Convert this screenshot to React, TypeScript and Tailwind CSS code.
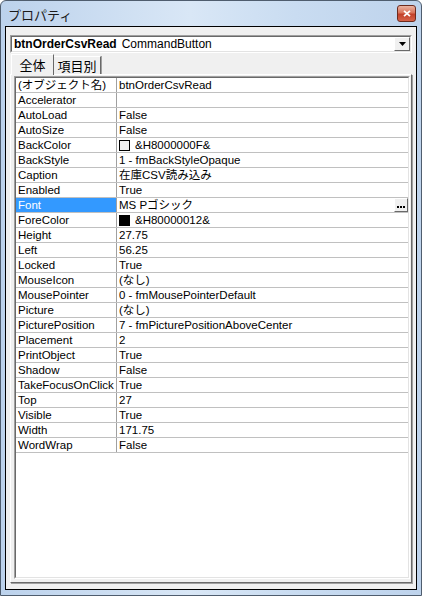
import React from 'react';

interface Prop {
  name: string;
  value: string;
  swatch?: 'light' | 'dark';
  selected?: boolean;
}

const props: Prop[] = [
  { name: '(オブジェクト名)', value: 'btnOrderCsvRead' },
  { name: 'Accelerator', value: '' },
  { name: 'AutoLoad', value: 'False' },
  { name: 'AutoSize', value: 'False' },
  { name: 'BackColor', value: '&H8000000F&', swatch: 'light' },
  { name: 'BackStyle', value: '1 - fmBackStyleOpaque' },
  { name: 'Caption', value: '在庫CSV読み込み' },
  { name: 'Enabled', value: 'True' },
  { name: 'Font', value: 'MS Pゴシック', selected: true },
  { name: 'ForeColor', value: '&H80000012&', swatch: 'dark' },
  { name: 'Height', value: '27.75' },
  { name: 'Left', value: '56.25' },
  { name: 'Locked', value: 'True' },
  { name: 'MouseIcon', value: '(なし)' },
  { name: 'MousePointer', value: '0 - fmMousePointerDefault' },
  { name: 'Picture', value: '(なし)' },
  { name: 'PicturePosition', value: '7 - fmPicturePositionAboveCenter' },
  { name: 'Placement', value: '2' },
  { name: 'PrintObject', value: 'True' },
  { name: 'Shadow', value: 'False' },
  { name: 'TakeFocusOnClick', value: 'True' },
  { name: 'Top', value: '27' },
  { name: 'Visible', value: 'True' },
  { name: 'Width', value: '171.75' },
  { name: 'WordWrap', value: 'False' },
];

const font = { fontFamily: '"Liberation Sans", "Noto Sans CJK JP", sans-serif' };
const cjk = { fontFamily: '"Noto Sans CJK JP", sans-serif' };

const App: React.FC = () => {
  return (
    <div
      style={font}
      className="w-[422px] h-[596px] flex flex-col border border-[#4f5d6e] rounded-t-[6px] bg-[linear-gradient(90deg,#bcd2ec,#d9e7f6_45%,#c9dcf1_70%,#bed3ec)] text-[11.5px] leading-[14px] text-black overflow-hidden select-none"
    >
      {/* Title bar */}
      <div className="h-[25px] shrink-0 flex items-start justify-between pl-[7px] pr-[5px]">
        <span className="mt-[6px] text-[13px] leading-[15px] text-[#1b1b1b]" style={cjk}>
          プロパティ
        </span>
        <div className="mt-[4px] w-[19px] h-[17px] rounded-[3px] border border-[#6d2b1e] bg-[linear-gradient(180deg,#eab3a2,#d9735a_45%,#c2402a_55%,#d7644a)] flex items-center justify-center">
          <svg width="8" height="7" viewBox="0 0 8 7">
            <path d="M1 0.8 L7 6.2 M7 0.8 L1 6.2" stroke="#ffffff" strokeWidth="1.8" />
          </svg>
        </div>
      </div>

      {/* Client area */}
      <div className="flex-1 mx-[4px] mb-[5px] border border-black bg-[#f0f0f0] flex flex-col px-[4px] pt-[8px] pb-[6px]">
        {/* Object combo */}
        <div className="h-[18px] border border-t-[#a0a0a0] border-l-[#a0a0a0] border-b-white border-r-white">
          <div className="h-full border border-t-[#696969] border-l-[#696969] border-b-[#e3e3e3] border-r-[#e3e3e3] bg-white flex items-center text-[12px]">
            <span className="pl-[2px] font-bold">btnOrderCsvRead</span>
            <span className="pl-[5px]">CommandButton</span>
            <div className="ml-auto h-[14px] w-[16px] bg-[#f0f0f0] border border-t-white border-l-white border-b-[#696969] border-r-[#696969] flex items-center justify-center">
              <svg width="7" height="4" viewBox="0 0 7 4">
                <path d="M0 0 H7 L3.5 4 Z" fill="#000" />
              </svg>
            </div>
          </div>
        </div>

        {/* Tabs */}
        <div className="h-[21px] flex items-end pl-[1px] relative z-10">
          <div className="h-[21px] w-[43px] border border-b-0 border-t-white border-l-white border-r-[#696969] bg-[#f0f0f0] flex items-center justify-center text-[13px] -mb-[1px]" style={cjk}>
            全体
          </div>
          <div className="h-[18px] w-[47px] border border-b-0 border-t-white border-l-0 border-r-[#696969] shadow-[1px_0_0_#a0a0a0] flex items-center justify-center text-[13px]" style={cjk}>
            項目別
          </div>
        </div>

        {/* Tab page */}
        <div className="flex-1 border border-t-white border-l-white border-b-[#696969] border-r-[#696969] shadow-[1px_1px_0_#a0a0a0] pl-[3px] pr-[1px] pt-[1px] pb-[3px] flex">
          {/* Property grid */}
          <div className="flex-1 border border-t-[#a0a0a0] border-l-[#a0a0a0] border-b-white border-r-white">
            <div className="h-full border border-t-[#696969] border-l-[#696969] border-b-[#e3e3e3] border-r-[#e3e3e3] bg-white">
              {props.map(p => (
                <div key={p.name} className="flex h-[15px] border-b border-[#c0c0c0]">
                  <div
                    className={`w-[100px] shrink-0 pl-[2px] whitespace-nowrap overflow-hidden ${
                      p.selected ? 'bg-[#3399ff] text-white' : ''
                    }`}
                  >
                    {p.name}
                  </div>
                  <div className="w-px bg-[#a0a0a0] shrink-0" />
                  <div className="flex-1 flex items-center pl-[2px] whitespace-nowrap overflow-hidden">
                    {p.swatch && (
                      <span
                        className={`inline-block w-[11px] h-[11px] border border-black mr-[5px] ${
                          p.swatch === 'light' ? 'bg-[#f0f0f0]' : 'bg-black'
                        }`}
                      />
                    )}
                    <span>{p.value}</span>
                    {p.selected && (
                      <div className="ml-auto h-[14px] w-[14px] bg-[#f0f0f0] border border-t-white border-l-white border-b-[#696969] border-r-[#696969] flex items-end justify-center pb-[3px]">
                        <svg width="8" height="2" viewBox="0 0 8 2">
                          <rect x="0" y="0" width="2" height="2" fill="#000" />
                          <rect x="3" y="0" width="2" height="2" fill="#000" />
                          <rect x="6" y="0" width="2" height="2" fill="#000" />
                        </svg>
                      </div>
                    )}
                  </div>
                </div>
              ))}
            </div>
          </div>
        </div>
      </div>
    </div>
  );
};

export default App;
